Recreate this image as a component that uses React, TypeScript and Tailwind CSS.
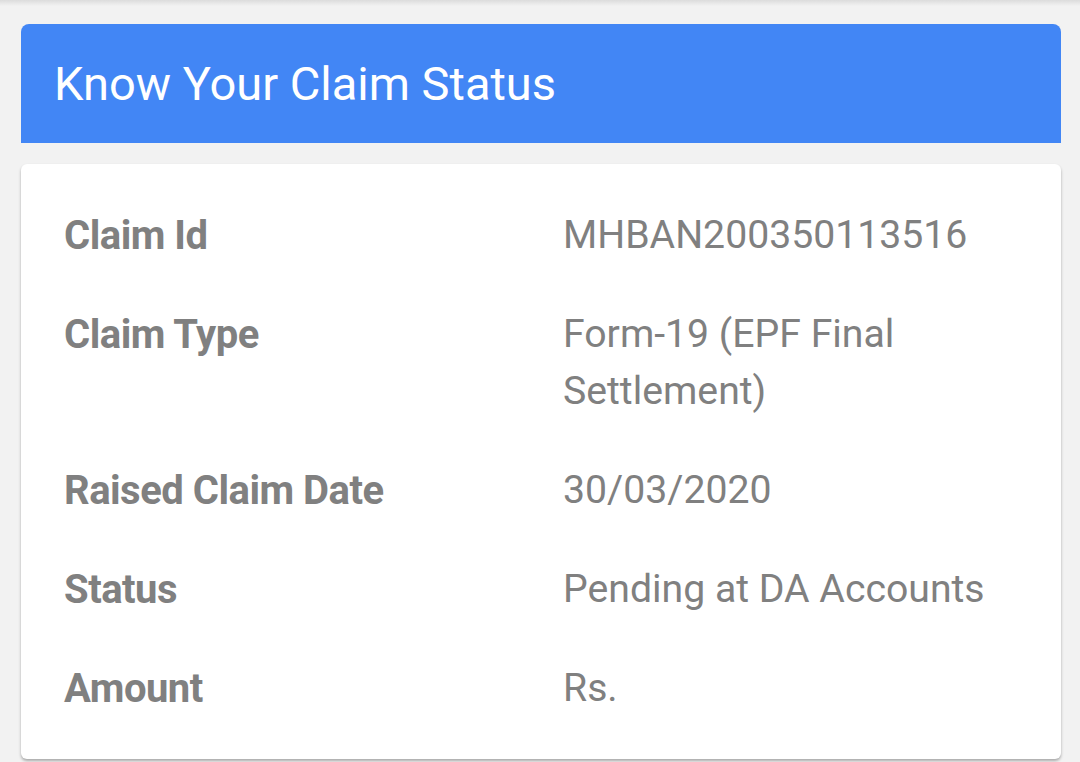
import React from "react";

const rows: { label: string; value: string }[] = [
  { label: "Claim Id", value: "MHBAN200350113516" },
  { label: "Claim Type", value: "Form-19 (EPF Final Settlement)" },
  { label: "Raised Claim Date", value: "30/03/2020" },
  { label: "Status", value: "Pending at DA Accounts" },
  { label: "Amount", value: "Rs." },
];

export default function App() {
  return (
    <div
      className="relative w-[1080px] h-[762px] overflow-hidden bg-[#f2f2f2]"
      style={{ fontFamily: "Roboto, 'Noto Sans', sans-serif" }}
    >
      <div className="absolute left-0 top-0 w-full h-[6px] bg-gradient-to-b from-[#dcdcdc] to-[#f2f2f2]" />
      <div className="pl-[21px] pr-[19px] pt-[24px]">
        <div className="h-[119px] rounded-t-[8px] bg-[#4286f5] flex items-center pl-[33px]">
          <h1 className="text-white text-[47px] leading-none font-normal">
            Know Your Claim Status
          </h1>
        </div>
        <div className="mt-[21px] bg-white rounded-[6px] shadow-[0_2px_3px_rgba(0,0,0,0.3)] pl-[43px] pr-[43px] pt-[43px] pb-[42px] flex flex-col gap-[42px]">
          {rows.map((r) => (
            <div key={r.label} className="flex leading-[57px] text-[#808080]">
              <div className="w-[499px] shrink-0 text-[40px] font-bold tracking-[-0.5px]">{r.label}</div>
              <div className="flex-1 text-[39.2px] font-normal">{r.value}</div>
            </div>
          ))}
        </div>
      </div>
    </div>
  );
}
